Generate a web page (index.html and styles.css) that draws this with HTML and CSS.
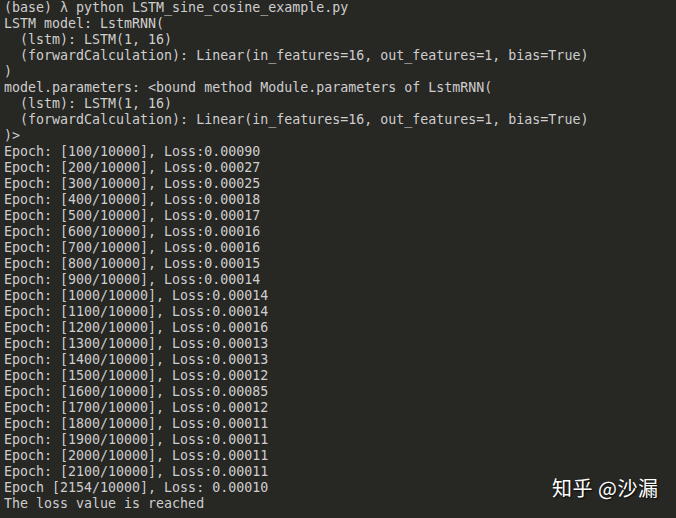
FILE: index.html
```html
<!DOCTYPE html>
<html>
<head>
<meta charset="utf-8">
<link rel="stylesheet" href="styles.css">
</head>
<body>
<div class="terminal">
<div class="output">
<div class="line">(base) λ python LSTM_sine_cosine_example.py</div>
<div class="line">LSTM model: LstmRNN(</div>
<div class="line">  (lstm): LSTM(1, 16)</div>
<div class="line">  (forwardCalculation): Linear(in_features=16, out_features=1, bias=True)</div>
<div class="line">)</div>
<div class="line">model.parameters: &lt;bound method Module.parameters of LstmRNN(</div>
<div class="line">  (lstm): LSTM(1, 16)</div>
<div class="line">  (forwardCalculation): Linear(in_features=16, out_features=1, bias=True)</div>
<div class="line">)&gt;</div>
<div class="line">Epoch: [100/10000], Loss:0.00090</div>
<div class="line">Epoch: [200/10000], Loss:0.00027</div>
<div class="line">Epoch: [300/10000], Loss:0.00025</div>
<div class="line">Epoch: [400/10000], Loss:0.00018</div>
<div class="line">Epoch: [500/10000], Loss:0.00017</div>
<div class="line">Epoch: [600/10000], Loss:0.00016</div>
<div class="line">Epoch: [700/10000], Loss:0.00016</div>
<div class="line">Epoch: [800/10000], Loss:0.00015</div>
<div class="line">Epoch: [900/10000], Loss:0.00014</div>
<div class="line">Epoch: [1000/10000], Loss:0.00014</div>
<div class="line">Epoch: [1100/10000], Loss:0.00014</div>
<div class="line">Epoch: [1200/10000], Loss:0.00016</div>
<div class="line">Epoch: [1300/10000], Loss:0.00013</div>
<div class="line">Epoch: [1400/10000], Loss:0.00013</div>
<div class="line">Epoch: [1500/10000], Loss:0.00012</div>
<div class="line">Epoch: [1600/10000], Loss:0.00085</div>
<div class="line">Epoch: [1700/10000], Loss:0.00012</div>
<div class="line">Epoch: [1800/10000], Loss:0.00011</div>
<div class="line">Epoch: [1900/10000], Loss:0.00011</div>
<div class="line">Epoch: [2000/10000], Loss:0.00011</div>
<div class="line">Epoch: [2100/10000], Loss:0.00011</div>
<div class="line">Epoch [2154/10000], Loss: 0.00010</div>
<div class="line">The loss value is reached</div>
</div>
<div class="watermark">知乎 @沙漏</div>
</div>
</body>
</html>
```

FILE: styles.css
```css
html, body {
  margin: 0;
  padding: 0;
  background: #272724;
}
.terminal {
  position: relative;
  width: 676px;
  height: 518px;
  overflow: hidden;
  background: #272724;
}
.output {
  display: flex;
  flex-direction: column;
  align-items: flex-start;
  padding: 0 0 0 4px;
  font-family: "DejaVu Sans Mono", "Liberation Mono", monospace;
  font-size: 13.3px;
  line-height: 16px;
  color: #cecece;
}
.line {
  white-space: pre;
}
.watermark {
  position: absolute;
  left: 552px;
  top: 474px;
  font-family: "Noto Sans CJK SC", "Noto Sans", sans-serif;
  font-size: 20px;
  line-height: 28px;
  color: #ffffff;
  text-shadow: 1px 1px 2px rgba(0,0,0,0.8);
  letter-spacing: 0.5px;
}
```
